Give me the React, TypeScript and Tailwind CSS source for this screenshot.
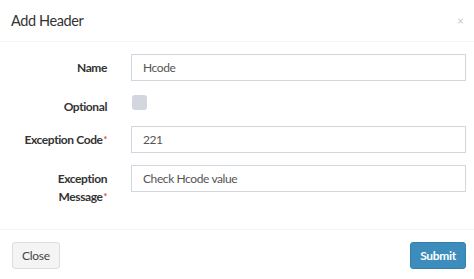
import React from "react";

const font = { fontFamily: "Lato, 'Liberation Sans', sans-serif" };

const Req = () => <sup className="text-[9px] text-[#dd4b39] relative -top-[1px] ml-[1px]">*</sup>;

export default function App() {
  return (
    <div className="w-[474px] h-[279px] bg-white text-[#333]" style={font}>
      <div className="h-[42px] border-b border-[#f4f4f4] flex items-center justify-between pl-[11px] pr-[10px]">
        <h4 className="text-[14.5px] leading-[20px] tracking-[-0.4px] text-[#333]">Add Header</h4>
        <span className="text-[12px] text-[#c8c8c8] leading-none">×</span>
      </div>

      <div className="pt-[12px] pb-[23px] pr-[8px] flex flex-col gap-[12px] border-b border-[#f4f4f4]">
        <div className="flex items-start h-[27px]">
          <label className="w-[107px] text-right font-bold text-[12px] tracking-[-0.4px] leading-[18px] pt-[5px]">Name</label>
          <div className="ml-[24px] flex-1 h-[27px] border border-[#d2d6de] px-[11px] flex items-center text-[12px] tracking-[-0.4px] text-[#555]">Hcode</div>
        </div>
        <div className="flex items-start h-[21px]">
          <label className="w-[107px] text-right font-bold text-[12px] tracking-[-0.4px] leading-[18px] pt-[5px]">Optional</label>
          <div className="ml-[25px] mt-[2px] w-[15px] h-[15px] rounded-[3px] bg-[#d2d6de]"></div>
        </div>
        <div className="flex items-start h-[27px]">
          <label className="w-[107px] text-right font-bold text-[12px] tracking-[-0.4px] leading-[18px] pt-[5px]">Exception Code<Req /></label>
          <div className="ml-[24px] flex-1 h-[27px] border border-[#d2d6de] px-[11px] flex items-center text-[12px] tracking-[-0.4px] text-[#555]">221</div>
        </div>
        <div className="flex items-start">
          <label className="w-[107px] text-right font-bold text-[12px] tracking-[-0.4px] leading-[18px] pt-[5px]">Exception<br />Message<Req /></label>
          <div className="ml-[24px] flex-1 h-[27px] border border-[#d2d6de] px-[11px] flex items-center text-[12px] tracking-[-0.4px] text-[#555]">Check Hcode value</div>
        </div>
      </div>

      <div className="flex items-center justify-between pl-[12px] pr-[8px] pt-[12px]">
        <button className="h-[27px] px-[9px] bg-[#f4f4f4] border border-[#ddd] rounded-[3px] text-[12px] tracking-[-0.3px] text-[#444]">Close</button>
        <button className="h-[27px] px-[9px] bg-[#3c8dbc] border border-[#367fa9] rounded-[3px] text-[12px] tracking-[-0.3px] font-bold text-white">Submit</button>
      </div>
    </div>
  );
}
